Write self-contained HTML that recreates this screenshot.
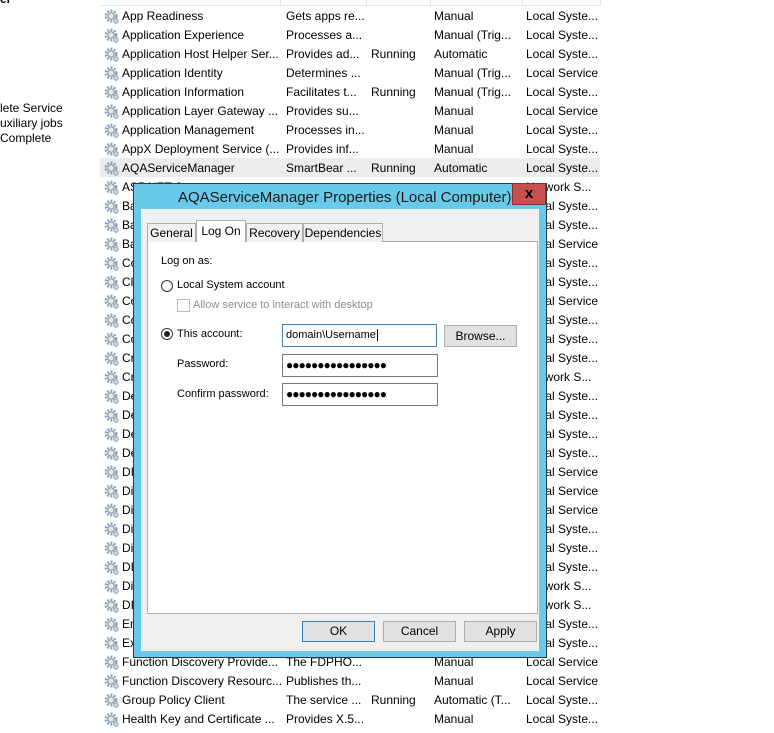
<!DOCTYPE html>
<html><head><meta charset="utf-8"><style>
*{margin:0;padding:0;box-sizing:border-box}
body{width:774px;height:733px;background:#fff;position:relative;overflow:hidden;font-family:"Liberation Sans",sans-serif;font-size:12px;color:#000}
.a{position:absolute;white-space:nowrap}
.row{position:absolute;left:100px;width:500px;height:19px;line-height:21px}
.row span{position:absolute;white-space:nowrap;overflow:hidden}
.row svg{position:absolute;left:4px;top:3px}
.hdr{position:absolute;top:0;height:6px;left:100px;width:500px;border-bottom:1px solid #e5e5e5}
.vl{position:absolute;top:0;height:6px;width:1px;background:#e5e5e5}
.dlg{position:absolute;left:133px;top:183px;width:414px;height:475px;background:#69c9e9;border:1px solid #2a3a44}
.tb{position:absolute;font-size:12px;height:19px;line-height:18px;border:1px solid #adadad;border-bottom:none;background:#f0f0f0;text-align:center;white-space:nowrap;overflow:hidden}
.btn{position:absolute;height:21px;border:1px solid #adadad;background:#e1e1e1;font-size:12px;text-align:center;line-height:19px}
.inp{position:absolute;height:23px;border:1px solid #7a7a7a;background:#fff;font-size:11px;line-height:21px;padding-left:3px}
.d{font-size:11px}
</style></head><body>
<svg width="0" height="0" style="position:absolute"><defs><g id="g"><circle cx="7" cy="7" r="5.2" fill="none" stroke="#8fa4b8" stroke-width="2.6" stroke-dasharray="2 1.4"/><circle cx="7" cy="7" r="3.2" fill="#dfe8f0" stroke="#7d93a8" stroke-width="1"/><circle cx="12" cy="12" r="2.3" fill="#c9d6e2" stroke="#8195a8" stroke-width="0.8"/></g></defs></svg>
<div class="a" style="left:0;top:-8px;font-weight:bold">er</div>
<div class="a" style="left:0;top:101px">lete Service</div>
<div class="a" style="left:0;top:116px">uxiliary jobs</div>
<div class="a" style="left:0;top:131px">Complete</div>
<div class="hdr"></div>
<div class="vl" style="left:280px"></div><div class="vl" style="left:366px"></div><div class="vl" style="left:430px"></div><div class="vl" style="left:522px"></div><div class="vl" style="left:600px"></div>
<div id="rows"></div>
<script>
var R=[
["App Readiness","Gets apps re...","","Manual","Local Syste..."],
["Application Experience","Processes a...","","Manual (Trig...","Local Syste..."],
["Application Host Helper Ser...","Provides ad...","Running","Automatic","Local Syste..."],
["Application Identity","Determines ...","","Manual (Trig...","Local Service"],
["Application Information","Facilitates t...","Running","Manual (Trig...","Local Syste..."],
["Application Layer Gateway ...","Provides su...","","Manual","Local Service"],
["Application Management","Processes in...","","Manual","Local Syste..."],
["AppX Deployment Service (...","Provides inf...","","Manual","Local Syste..."],
["AQAServiceManager","SmartBear ...","Running","Automatic","Local Syste..."],
["ASP.NET State","","","","Network S..."]];
var f=["Ba","Ba","Ba","Co","Cl","Co","Co","Co","Cr","Cr","De","De","De","De","DI","Di","Di","Di","Di","DI","Di","DI","En","Ex"];
var l=["Local Syste...","Local Syste...","Local Service","Local Syste...","Local Syste...","Local Service","Local Syste...","Local Syste...","Local Syste...","Network S...","Local Syste...","Local Syste...","Local Syste...","Local Syste...","Local Service","Local Service","Local Service","Local Syste...","Local Syste...","Local Syste...","Network S...","Network S...","Local Syste...","Local Syste..."];
for(var i=0;i<24;i++)R.push([f[i],"","","",l[i]]);
R.push(["Function Discovery Provide...","The FDPHO...","","Manual","Local Service"]);
R.push(["Function Discovery Resourc...","Publishes th...","","Manual","Local Service"]);
R.push(["Group Policy Client","The service ...","Running","Automatic (T...","Local Syste..."]);
R.push(["Health Key and Certificate ...","Provides X.5...","","Manual","Local Syste..."]);
var h="";
for(var i=0;i<R.length;i++){var r=R[i];
h+='<div class="row" style="top:'+(6+i*19)+'px;'+(i==8?'background:#ececec':'')+'"><svg width="16" height="16"><use href="#g"/></svg><span style="left:22px">'+r[0]+'</span><span style="left:186px">'+r[1]+'</span><span style="left:271px">'+r[2]+'</span><span style="left:334px">'+r[3]+'</span><span style="left:426px">'+r[4]+'</span></div>';}
document.getElementById("rows").innerHTML=h;
</script>
<div class="dlg">
 <div class="a" style="left:44px;top:5px;font-size:15px;color:#1a1a1a">AQAServiceManager Properties (Local Computer)</div>
 <div style="position:absolute;left:378px;top:-1px;width:34px;height:22px;background:#c75050;border:1px solid #8a3030;color:#000;font-weight:bold;font-size:15px;text-align:center;line-height:19px">x</div>
 <div style="position:absolute;left:7px;top:25px;width:398px;height:442px;background:#f0f0f0">
  <div style="position:absolute;left:6px;top:32px;width:391px;height:373px;background:#fff;border:1px solid #adadad"></div>
  <div class="tb" style="left:6px;top:14px;width:49px">General</div>
  <div class="tb" style="left:55px;top:11px;width:50px;height:22px;background:#fff;line-height:20px;z-index:2">Log On</div>
  <div class="tb" style="left:105px;top:14px;width:57px">Recovery</div>
  <div class="tb" style="left:162px;top:14px;width:80px">Dependencies</div>
  <div class="a d" style="left:20px;top:46px">Log on as:</div>
  <div style="position:absolute;left:20px;top:71px;width:12px;height:12px;border:1px solid #333;border-radius:50%;background:#fff"></div>
  <div class="a d" style="left:36px;top:70px">Local System account</div>
  <div style="position:absolute;left:36px;top:90px;width:13px;height:13px;border:1px solid #bbb;background:#fff"></div>
  <div class="a d" style="left:52px;top:90px;color:#8d8d8d">Allow service to interact with desktop</div>
  <div style="position:absolute;left:20px;top:119px;width:12px;height:12px;border:1px solid #333;border-radius:50%;background:#fff"><div style="position:absolute;left:2px;top:2px;width:6px;height:6px;border-radius:50%;background:#222"></div></div>
  <div class="a d" style="left:36px;top:119px">This account:</div>
  <div class="inp" style="left:141px;top:115px;width:155px;border-color:#3c7fb1">domain\Username<span style="border-left:1px solid #000;margin-left:1px"></span></div>
  <div class="btn" style="left:303px;top:116px;width:73px;height:22px;line-height:20px">Browse...</div>
  <div class="a d" style="left:36px;top:149px">Password:</div>
  <div class="inp" style="left:141px;top:145px;width:156px;font-size:12px;letter-spacing:-1px">●●●●●●●●●●●●●●●●</div>
  <div class="a d" style="left:36px;top:179px">Confirm password:</div>
  <div class="inp" style="left:141px;top:174px;width:156px;font-size:12px;letter-spacing:-1px">●●●●●●●●●●●●●●●●</div>
  <div class="btn" style="left:161px;top:412px;width:73px;border-color:#3c7fb1">OK</div>
  <div class="btn" style="left:242px;top:412px;width:73px">Cancel</div>
  <div class="btn" style="left:323px;top:412px;width:73px">Apply</div>
 </div>
</div>
</body></html>
